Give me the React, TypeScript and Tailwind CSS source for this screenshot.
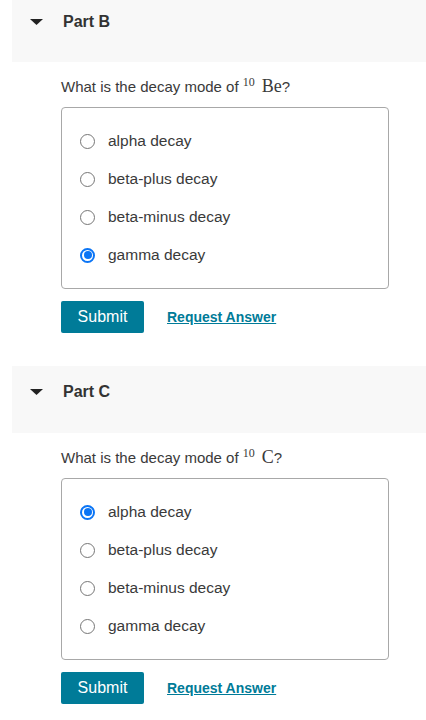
import { useState } from 'react'

const OPTIONS = ['alpha decay', 'beta-plus decay', 'beta-minus decay', 'gamma decay']

type PartProps = {
  label: string
  element: string
  initial: number
  headerClass: string
}

function Part({ label, element, initial, headerClass }: PartProps) {
  const [choice, setChoice] = useState<number>(initial)
  const name = `part-${label}`

  return (
    <section>
      {/* Collapsible header */}
      <div className={`ml-3 flex items-start bg-[#f8f8f8] pl-[18px] ${headerClass}`}>
        <svg width="13" height="6" viewBox="0 0 13 6" className="mt-[6px] shrink-0">
          <polygon points="0,0 13,0 6.5,6" fill="#222" />
        </svg>
        <span className="ml-[20px] text-[16px] font-bold leading-[18px] text-[#333]">Part {label}</span>
      </div>

      <div className="pl-[61px] pr-[37px]">
        <p className="mt-[15px] text-[15px] leading-[18px] text-[#3a3a3a]">
          What is the decay mode of{' '}
          <span className="font-['Liberation_Serif',serif]">
            <span className="relative -top-[6px] text-[12px] leading-none">10</span>
            <span className="ml-[7px] text-[18px]">{element}</span>
          </span>
          ?
        </p>

        {/* Answer choices */}
        <div className="mt-[11px] rounded-[4px] border border-[#a8a8a8] py-[14px] pl-[18px]">
          {OPTIONS.map((opt, i) => {
            const checked = choice === i
            return (
              <label key={opt} className="flex h-[38px] cursor-pointer items-center">
                <input
                  type="radio"
                  name={name}
                  checked={checked}
                  onChange={() => setChoice(i)}
                  className="sr-only"
                />
                {checked ? (
                  <span className="flex h-[15px] w-[15px] items-center justify-center rounded-full border-2 border-[#0b75f5]">
                    <span className="h-[8px] w-[8px] rounded-full bg-[#0b75f5]" />
                  </span>
                ) : (
                  <span className="h-[15px] w-[15px] rounded-full border-[1.5px] border-[#767676]" />
                )}
                <span className="ml-[13px] text-[15.5px] text-[#3a3a3a]">{opt}</span>
              </label>
            )
          })}
        </div>

        <div className="mt-[12px] flex items-center">
          <button className="h-[32px] w-[83px] rounded-[2px] bg-[#007b98] text-[16px] text-white">
            Submit
          </button>
          <a href="#" className="ml-[23px] text-[14px] font-bold text-[#007b98] underline">
            Request Answer
          </a>
        </div>
      </div>
    </section>
  )
}

export default function App() {
  return (
    <div className="min-h-[720px] bg-white font-['Liberation_Sans',Arial,sans-serif]">
      <Part label="B" element="Be" initial={3} headerClass="h-[62px] pt-[13px]" />
      <div className="h-[33px]" />
      <Part label="C" element="C" initial={0} headerClass="h-[67px] pt-[17px]" />
    </div>
  )
}
